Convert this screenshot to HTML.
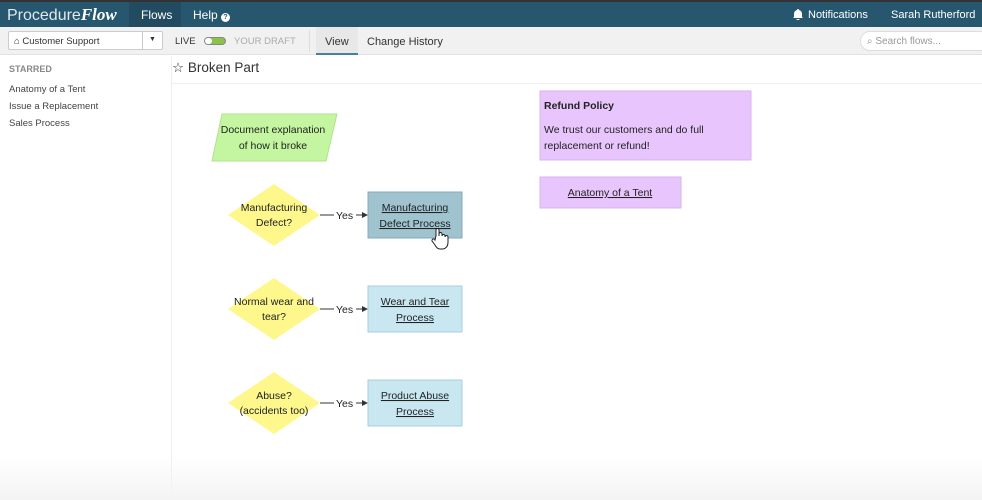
<!DOCTYPE html>
<html><head><style>
*{margin:0;padding:0;box-sizing:border-box}
body{width:982px;height:500px;overflow:hidden;font-family:"Liberation Sans",sans-serif;background:#fff;position:relative}
.nav{position:absolute;left:0;top:0;width:982px;height:27px;background:#27566f;color:#fff;font-size:12px}
.nav .strip{position:absolute;left:0;top:0;width:982px;height:2px;background:#333}
.nav span{position:absolute;top:8px}
.sub{position:absolute;left:0;top:27px;width:982px;height:28px;background:#f1f1f1;border-bottom:1px solid #e2e2e2;font-size:11px;color:#333}
.sub span{position:absolute}
.side{position:absolute;left:0;top:56px;width:172px;height:444px;border-right:1px solid #eee;font-size:9.5px;color:#444}
.side div{position:absolute;left:9px}
</style></head><body>
<div class="nav"><div class="strip"></div>
<span style="left:7px;top:5px;font-size:16px;color:#dfe9ee">Procedure<i style="font-family:'Liberation Serif',serif;font-weight:bold;font-size:17px;color:#fff">Flow</i></span>
<div style="position:absolute;left:129px;top:2px;width:52px;height:25px;background:#224b62"></div>
<span style="left:141px">Flows</span>
<span style="left:193px">Help <b style="display:inline-block;width:9px;height:9px;border-radius:50%;background:#fff;color:#27566f;font-size:7px;text-align:center;line-height:9px;vertical-align:0">?</b></span>
<svg style="position:absolute;left:792px;top:8px" width="12" height="12" viewBox="0 0 12 12"><path d="M6,1 a1,1 0 0 1 1,1 q3,1 3,4 v3 l1,1 h-10 l1,-1 v-3 q0,-3 3,-4 a1,1 0 0 1 1,-1z M4.5,11 h3 a1.5,1.5 0 0 1 -3,0z" fill="#fff"/></svg>
<span style="left:808px;font-size:11px;top:9px">Notifications</span>
<span style="left:891px;font-size:11px;top:9px">Sarah Rutherford</span>
</div>
<div class="sub">
<div style="position:absolute;left:8px;top:4px;width:155px;height:19px;background:#fff;border:1px solid #ccc;border-radius:2px;font-size:9.5px;padding:4px 0 0 5px;color:#333">⌂ Customer Support<span style="right:0;top:0;width:20px;height:17px;border-left:1px solid #ccc;text-align:center;font-size:7px;padding-top:4px">▼</span></div>
<span style="left:175px;top:9px;font-size:9.5px">LIVE</span>
<div style="position:absolute;left:204px;top:10px;width:22px;height:8px;border-radius:4px;background:#8bc34a;border:1px solid #888"><div style="width:7px;height:6px;border-radius:3px;background:#fff"></div></div>
<span style="left:234px;top:9px;font-size:9.5px;color:#aaa">YOUR DRAFT</span>
<div style="position:absolute;left:309px;top:3px;width:1px;height:22px;background:#ddd"></div>
<div style="position:absolute;left:316px;top:0;width:42px;height:28px;background:#e8e8e8;border-bottom:2px solid #4a7fa0"></div>
<span style="left:325px;top:9px">View</span>
<span style="left:367px;top:9px">Change History</span>
<div style="position:absolute;left:860px;top:4px;width:130px;height:20px;background:#fff;border:1px solid #ddd;border-radius:10px;font-size:10px;color:#999;padding:4px 0 0 6px">⌕ Search flows...</div>
</div>
<div class="side">
<div style="top:8px;font-weight:bold;color:#888;font-size:9px">STARRED</div>
<div style="top:28px">Anatomy of a Tent</div>
<div style="top:45px">Issue a Replacement</div>
<div style="top:62px">Sales Process</div>
</div>
<div style="position:absolute;left:172px;top:60px;font-size:13.5px;color:#333">☆ Broken Part</div>
<div style="position:absolute;left:172px;top:83px;width:810px;height:1px;background:#eee"></div>
<div style="position:absolute;left:0;top:455px;width:982px;height:45px;background:linear-gradient(#fff0,#f4f4f4)"></div>
<svg style="position:absolute;left:0;top:0" width="982" height="500" font-family="Liberation Sans" font-size="10.5" fill="#222">
<polygon points="222,114 337,114 326,161 212,161" fill="#c4f5a0" stroke="#b0e28b"/>
<text x="273" y="133" text-anchor="middle">Document explanation</text>
<text x="273" y="149" text-anchor="middle">of how it broke</text>
<g>
<polygon points="274,184 320,215 274,246 228,215" fill="#fdf78c"/>
<text x="274" y="211" text-anchor="middle">Manufacturing</text><text x="274" y="226" text-anchor="middle">Defect?</text>
<line x1="320" y1="215" x2="334" y2="215" stroke="#333"/><text x="336" y="219">Yes</text>
<line x1="356" y1="215" x2="366" y2="215" stroke="#333"/><polygon points="362,212 368,215 362,218" fill="#333"/>
<rect x="368" y="192" width="94" height="46" fill="#9fc3cf" stroke="#88aab8"/>
<text x="415" y="211" text-anchor="middle" text-decoration="underline">Manufacturing</text><text x="415" y="227" text-anchor="middle" text-decoration="underline">Defect Process</text>
</g>
<g>
<polygon points="274,278 320,309 274,340 228,309" fill="#fdf78c"/>
<text x="274" y="305" text-anchor="middle">Normal wear and</text><text x="274" y="320" text-anchor="middle">tear?</text>
<line x1="320" y1="309" x2="334" y2="309" stroke="#333"/><text x="336" y="313">Yes</text>
<line x1="356" y1="309" x2="366" y2="309" stroke="#333"/><polygon points="362,306 368,309 362,312" fill="#333"/>
<rect x="368" y="286" width="94" height="46" fill="#c8e7f1" stroke="#a9cfdc"/>
<text x="415" y="305" text-anchor="middle" text-decoration="underline">Wear and Tear</text><text x="415" y="321" text-anchor="middle" text-decoration="underline">Process</text>
</g>
<g>
<polygon points="274,372 320,403 274,434 228,403" fill="#fdf78c"/>
<text x="274" y="399" text-anchor="middle">Abuse?</text><text x="274" y="414" text-anchor="middle">(accidents too)</text>
<line x1="320" y1="403" x2="334" y2="403" stroke="#333"/><text x="336" y="407">Yes</text>
<line x1="356" y1="403" x2="366" y2="403" stroke="#333"/><polygon points="362,400 368,403 362,406" fill="#333"/>
<rect x="368" y="380" width="94" height="46" fill="#c8e7f1" stroke="#a9cfdc"/>
<text x="415" y="399" text-anchor="middle" text-decoration="underline">Product Abuse</text><text x="415" y="415" text-anchor="middle" text-decoration="underline">Process</text>
</g>
<rect x="540" y="91" width="211" height="69" fill="#e8c6fd" stroke="#d9b2ef"/>
<text x="544" y="109" font-weight="bold">Refund Policy</text>
<text x="544" y="133">We trust our customers and do full</text>
<text x="544" y="149">replacement or refund!</text>
<rect x="540" y="177" width="141" height="31" fill="#e8c6fd" stroke="#d9b2ef"/>
<text x="610" y="196" text-anchor="middle" text-decoration="underline">Anatomy of a Tent</text>
<path d="M436,236 v-6 a1.5,1.5 0 0 1 3,0 v6 v-2 a1.5,1.5 0 0 1 3,0 v2 a1.5,1.5 0 0 1 3,0 v1 a1.5,1.5 0 0 1 3,0 v5 q0,6 -5,7 h-3 q-3,0 -5,-4 l-3,-4 a1.5,1.5 0 0 1 3,-1 z" fill="#fff" stroke="#222"/>
</svg>
</body></html>
